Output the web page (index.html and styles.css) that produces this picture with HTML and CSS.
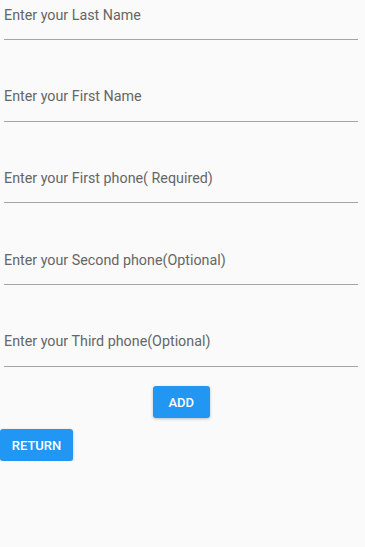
FILE: index.html
```html
<!DOCTYPE html>
<html>
<head>
<meta charset="utf-8">
<link rel="stylesheet" href="styles.css">
</head>
<body>
<div class="form">
  <div class="fields">
    <div class="field"><span class="label">Enter your Last Name</span></div>
    <div class="field"><span class="label">Enter your First Name</span></div>
    <div class="field"><span class="label">Enter your First phone( Required)</span></div>
    <div class="field"><span class="label">Enter your Second phone(Optional)</span></div>
    <div class="field"><span class="label">Enter your Third phone(Optional)</span></div>
  </div>
  <div class="actions"><button class="btn btn-add">ADD</button></div>
</div>
<button class="btn btn-return">RETURN</button>
</body>
</html>
```
FILE: styles.css
```css
html, body {
  margin: 0;
  padding: 0;
  background: #fafafa;
  font-family: Roboto, "Liberation Sans", sans-serif;
}
.form {
  width: 354px;
  margin-left: 4px;
  padding-top: 6.5px;
}
.fields {
  display: flex;
  flex-direction: column;
  gap: 48.2px;
}
.field {
  height: 32.5px;
  border-bottom: 1px solid #a4a4a4;
}
.label {
  display: block;
  font-size: 14.3px;
  line-height: 16px;
  color: #666666;
}
.actions {
  display: flex;
  justify-content: center;
  padding-top: 19.3px;
}
.btn {
  border: none;
  background: #2196f3;
  color: #ffffff;
  font-family: Roboto, "Liberation Sans", sans-serif;
  font-weight: 500;
  font-size: 13px;
  height: 32px;
  border-radius: 3px;
  box-shadow: 0 1px 3px rgba(0,0,0,0.25);
  cursor: pointer;
}
.btn-add {
  padding: 0 16px;
  width: 57px;
}
.btn-return {
  display: block;
  margin-top: 11px;
  padding: 0 11px;
  width: 73px;
}
```
